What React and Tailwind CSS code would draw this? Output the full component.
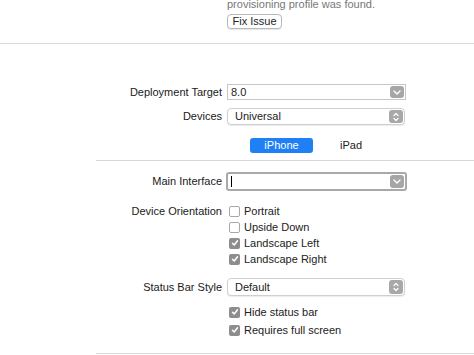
import React from "react";

const Chevron = () => (
  <svg width="8" height="5" viewBox="0 0 8 5">
    <path d="M1 1 L4 4 L7 1" fill="none" stroke="white" strokeWidth="1.4" strokeLinecap="round" strokeLinejoin="round" />
  </svg>
);

const ComboBox = ({ value, focused }) => (
  <div
    className={`flex items-stretch bg-white ${
      focused
        ? "h-[19px] border-[2px] border-[#a9a9a9] rounded-[3px] -ml-[1px] w-[181px]"
        : "h-[16px] w-[179px] border border-[#c6c6c6]"
    }`}
  >
    <div className="flex-1 flex items-center pl-[3px] text-[11px] text-[#222]">
      {focused ? <span className="w-px h-[11px] bg-black" /> : value}
    </div>
    <div className="w-[14px] bg-[#a6a6a6] rounded-[3px] flex items-center justify-center m-[1px]">
      <Chevron />
    </div>
  </div>
);

const PopUp = ({ value, tall }) => (
  <div
    className={`flex items-stretch w-[178px] bg-white border border-[#cfcfcf] rounded-[4px] shadow-[0_1px_1px_rgba(0,0,0,0.08)] ${
      tall ? "h-[18px]" : "h-[17px]"
    }`}
  >
    <div className="flex-1 flex items-center pl-[7px] text-[11px] text-[#222]">{value}</div>
    <div className="w-[14px] bg-[#a8a8a8] rounded-[3px] flex items-center justify-center m-[1px]">
      <svg width="6" height="10" viewBox="0 0 6 10">
        <path d="M1 3.5 L3 1.5 L5 3.5 M1 6.5 L3 8.5 L5 6.5" fill="none" stroke="white" strokeWidth="1.2" strokeLinecap="round" strokeLinejoin="round" />
      </svg>
    </div>
  </div>
);

const Check = ({ checked, label }) => (
  <div className="flex items-center h-[16px] gap-[4px]">
    {checked ? (
      <div className="w-[11px] h-[11px] rounded-[2px] bg-[#8d8d8d] flex items-center justify-center">
        <svg width="8" height="8" viewBox="0 0 8 8">
          <path d="M1.5 4.2 L3.2 6 L6.5 1.8" fill="none" stroke="white" strokeWidth="1.5" strokeLinecap="round" strokeLinejoin="round" />
        </svg>
      </div>
    ) : (
      <div className="w-[11px] h-[11px] rounded-[2px] bg-white border border-[#a8a8a8]" />
    )}
    <span className="text-[11px] text-[#222]">{label}</span>
  </div>
);

const Row = ({ label, children, className = "" }) => (
  <div className={`flex items-center ${className}`}>
    <div className="w-[222px] text-right text-[11px] text-[#1a1a1a]">{label}</div>
    <div className="ml-[5px]">{children}</div>
  </div>
);

export default function App() {
  return (
    <div className="w-[474px] h-[355px] bg-white overflow-hidden font-['Liberation_Sans',Arial,sans-serif]">
      <div className="h-[44px] border-b border-[#dcdcdc] pl-[227px] flex flex-col items-start">
        <div className="text-[11px] leading-[14px] text-[#777] -mt-[3px]">provisioning profile was found.</div>
        <button className="mt-[3px] h-[15px] w-[55px] rounded-[4px] border border-[#b9b9b9] bg-white shadow-[0_1px_1px_rgba(0,0,0,0.1)] text-[11px] leading-[13px] text-[#222]">
          Fix Issue
        </button>
      </div>

      <div className="ml-[96px] border-b border-[#d8d8d8] pt-[40px] pb-[7px]">
        <div className="-ml-[96px]">
          <Row label="Deployment Target" className="h-[16px]">
            <ComboBox value="8.0" />
          </Row>
          <Row label="Devices" className="h-[17px] mt-[8px]">
            <PopUp value="Universal" />
          </Row>
          <div className="flex items-center mt-[13px] h-[15px] pl-[250px]">
            <div className="w-[63px] h-[15px] rounded-[3px] bg-[#1f7ff5] text-white text-[11px] flex items-center justify-center">
              iPhone
            </div>
            <div className="ml-[27px] text-[11px] text-[#222]">iPad</div>
          </div>
        </div>
      </div>

      <div className="ml-[96px] border-b border-[#d8d8d8] pt-[11px] pb-[15px]">
        <div className="-ml-[96px]">
          <Row label="Main Interface" className="h-[19px]">
            <ComboBox focused />
          </Row>
          <div className="flex mt-[12px]">
            <div className="w-[222px] text-right text-[11px] text-[#1a1a1a] h-[16px] leading-[16px]">Device Orientation</div>
            <div className="ml-[7px] flex flex-col">
              <Check label="Portrait" />
              <Check label="Upside Down" />
              <Check checked label="Landscape Left" />
              <Check checked label="Landscape Right" />
            </div>
          </div>
          <Row label="Status Bar Style" className="h-[18px] mt-[11px]">
            <PopUp value="Default" tall />
          </Row>
          <div className="flex flex-col pl-[229px] mt-[8px] gap-[2px]">
            <Check checked label="Hide status bar" />
            <Check checked label="Requires full screen" />
          </div>
        </div>
      </div>
    </div>
  );
}
